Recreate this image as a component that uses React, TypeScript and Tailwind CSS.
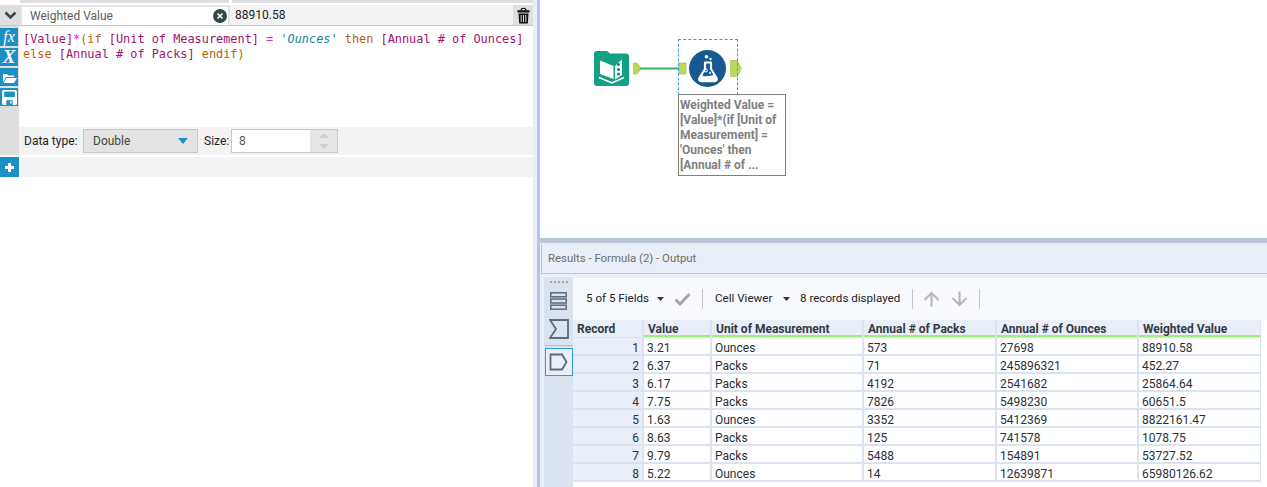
const headers = [
  { name: "Record", w: "w-[69px]" },
  { name: "Value", w: "w-[66px]" },
  { name: "Unit of Measurement", w: "w-[150px]" },
  { name: "Annual # of Packs", w: "w-[131px]" },
  { name: "Annual # of Ounces", w: "w-[140px]" },
  { name: "Weighted Value", w: "w-[121px]" },
];

const rows = [
  ["1", "3.21", "Ounces", "573", "27698", "88910.58"],
  ["2", "6.37", "Packs", "71", "245896321", "452.27"],
  ["3", "6.17", "Packs", "4192", "2541682", "25864.64"],
  ["4", "7.75", "Packs", "7826", "5498230", "60651.5"],
  ["5", "1.63", "Ounces", "3352", "5412369", "8822161.47"],
  ["6", "8.63", "Packs", "125", "741578", "1078.75"],
  ["7", "9.79", "Packs", "5488", "154891", "53727.52"],
  ["8", "5.22", "Ounces", "14", "12639871", "65980126.62"],
];

function RailButton({ children }: { children: React.ReactNode }) {
  return <div className="w-[18px] h-[18px] mb-[2px] bg-[#1c8fc4] flex items-center justify-center text-white">{children}</div>;
}

function Caret() {
  return <svg width="7" height="4" viewBox="0 0 7 4"><path d="M0 0h7L3.500 4z" fill="#333" /></svg>;
}

function FormulaPanel() {
  return (
    <div className="w-[533px] shrink-0 bg-white flex flex-col">
      <div className="h-[5px] flex pl-[20px] bg-white">
        <div className="w-[209px] h-[3px] bg-[#dedede]" />
        <div className="w-[281px] h-[3px] ml-[3px] bg-[#dedede]" />
        <div className="w-[20px] h-[3px] bg-[#dedede]" />
      </div>
      <div className="h-[21px] flex border-b border-[#c8c8c8]">
        <div className="w-[20px] bg-[#dedede] flex items-center justify-center">
          <svg width="13" height="9" viewBox="0 0 13 9"><path d="M1.500 1.500 6.500 6.500l5-5" fill="none" stroke="#37474f" strokeWidth="2.600" /></svg>
        </div>
        <div className="w-[210px] bg-white border-2 border-[#e4e4e4] border-b-0 flex items-center pl-[8px] pr-[1px] text-[#5b5b5b]">
          <span className="flex-1">Weighted Value</span>
          <div className="w-[14px] h-[14px] rounded-full bg-[#2f4a4a] flex items-center justify-center">
            <svg width="8" height="8" viewBox="0 0 8 8"><path d="M1.500 1.500l5 5M6.500 1.500l-5 5" stroke="#fff" strokeWidth="1.600" /></svg>
          </div>
        </div>
        <div className="flex-1 bg-[#f3f3f3] flex items-center pl-[5px] text-[#222]">88910.58</div>
        <div className="w-[20px] bg-[#dedede] flex items-center justify-center">
          <svg width="13" height="17" viewBox="0 0 13 17">
            <path d="M4 3.500C4 .5 9 .5 9 3.500" fill="none" stroke="#111" strokeWidth="1.200" />
            <path d="M.5 3.200h12v2.300H.5z" fill="#111" />
            <path d="M1.500 6.500h10l-.7 10H2.200z" fill="#111" />
            <path d="M4.200 8v7M6.500 8v7M8.800 8v7" stroke="#dedede" strokeWidth="1" />
          </svg>
        </div>
      </div>
      <div className="flex h-[129px]">
        <div className="w-[19px] bg-[#dedede] pt-[2px]">
          <RailButton><span className="font-['Liberation_Serif',serif] italic text-[16px] leading-[18px]">fx</span></RailButton>
          <RailButton><span className="font-['Liberation_Serif',serif] italic font-bold text-[19px] leading-[18px]">X</span></RailButton>
          <RailButton>
            <svg width="15" height="13" viewBox="0 0 15 13"><path d="M1 3h4l1 1.500h6V6H4L1 11z" fill="#fff" /><path d="M4.500 7H15l-3 5H1.500z" fill="#fff" /></svg>
          </RailButton>
          <RailButton>
            <svg width="15" height="15" viewBox="0 0 14 14"><path d="M0 1.500A1.500 1.500 0 0 1 1.500 0h11A1.500 1.500 0 0 1 14 1.500v11a1.500 1.500 0 0 1-1.500 1.500h-11A1.500 1.500 0 0 1 0 12.500z" fill="#fff" /><path d="M2 1.500h10v5H2z" fill="#1c8fc4" /><path d="M4 9.500h6V14H4z" fill="#1c8fc4" /><path d="M7.500 10.500h1.500v2H7.500z" fill="#fff" /></svg>
          </RailButton>
        </div>
        <div className="flex-1 flex flex-col min-w-0">
          <div className="h-[101px] pl-[4px] pt-[6px] font-['DejaVu_Sans_Mono',monospace] text-[11.88px] leading-[15px] whitespace-pre">
            <div>
              <span className="text-[#a0146e]">[Value]</span><span className="text-[#ee22ee]">*</span><span className="text-[#b8620e]">(if </span><span className="text-[#a0146e]">[Unit of Measurement]</span><span className="text-[#ee22ee]"> = </span><span className="text-[#12899a] italic">'Ounces'</span><span className="text-[#b8620e]"> then </span><span className="text-[#a0146e]">[Annual # of Ounces]</span>
            </div>
            <div>
              <span className="text-[#b8620e]">else </span><span className="text-[#a0146e]">[Annual # of Packs]</span><span className="text-[#b8620e]"> endif)</span>
            </div>
          </div>
          <div className="h-[28px] bg-[#f3f3f3] flex items-center pl-[5px] text-[#222]">
            <span className="w-[59px]">Data type:</span>
            <div className="w-[115px] h-[24px] bg-[#e3e3e3] border border-[#c8c8c8] flex items-center pl-[9px] pr-[9px] text-[#444]">
              <span className="flex-1">Double</span>
              <svg width="10" height="6" viewBox="0 0 10 6"><path d="M0 0h10L5 6z" fill="#1c8fc4" /></svg>
            </div>
            <span className="ml-[6px] w-[27px]">Size:</span>
            <div className="w-[107px] h-[24px] bg-white border border-[#c8c8c8] flex text-[#555]">
              <span className="flex-1 pl-[7px] leading-[22px]">8</span>
              <div className="w-[27px] bg-[#e6e6e6] flex flex-col items-center justify-around">
                <svg width="10" height="5" viewBox="0 0 10 5"><path d="M0 5h10L5 0z" fill="#cfcfcf" /></svg>
                <svg width="10" height="5" viewBox="0 0 10 5"><path d="M0 0h10L5 5z" fill="#cfcfcf" /></svg>
              </div>
            </div>
          </div>
        </div>
      </div>
      <div className="h-[20px] mt-[2px] flex bg-[#f3f3f3]">
        <div className="w-[19px] bg-[#1c8fc4] flex items-center justify-center">
          <svg width="9" height="9" viewBox="0 0 9 9"><path d="M3 0h3v3h3v3H6v3H3V6H0V3h3z" fill="#fff" /></svg>
        </div>
      </div>
    </div>
  );
}

function Canvas() {
  return (
    <div className="relative h-[238px] bg-white shrink-0">
      <svg className="absolute left-[54px] top-[51px]" width="35" height="35" viewBox="0 0 35 35">
        <path d="M3 0h10l3 2.500h16a3 3 0 0 1 3 3V32a3 3 0 0 1-3 3H3a3 3 0 0 1-3-3V3a3 3 0 0 1 3-3z" fill="#14a085" />
        <path d="M6 9.500l13.500 5.500v13L6 23z" fill="#fff" />
        <path d="M21 15l7-6.500V24l-7 4.500z" fill="#fff" />
        <path d="M5 26.500 18 32l12-5.500" fill="none" stroke="#fff" strokeWidth="1.500" />
        <circle cx="24.500" cy="13.500" r="1.500" fill="#14806f" /><circle cx="24.500" cy="18.500" r="1.500" fill="#14806f" /><circle cx="24.500" cy="23" r="1.500" fill="#14806f" />
      </svg>
      <svg className="absolute left-[93px] top-[60px]" width="148" height="18" viewBox="0 0 148 18">
        <path d="M.5 3h3.500l3 3.500v4L4 14H.5z" fill="#bcd85f" stroke="#9ebd45" strokeWidth=".6" />
        <path d="M7 8.500h40" stroke="#3fae5c" strokeWidth="2" />
        <path d="M46 3h7v11h-7z" fill="#bcd85f" stroke="#9ebd45" strokeWidth=".6" />
        <path d="M97.500.5h6.500l4.500 8-4.500 8h-6.500z" fill="#bcd85f" stroke="#9ebd45" strokeWidth=".6" />
      </svg>
      <div className="absolute left-[138px] top-[39px] w-[60px] h-[56px] border border-dashed border-[#3a9ae0]" />
      <div className="absolute left-[149px] top-[50px] w-[37px] h-[37px] rounded-full bg-[#16588f] flex items-center justify-center">
        <svg width="30" height="30" viewBox="0 0 30 30">
          <circle cx="13.500" cy="2.800" r="1.800" fill="#fff" /><circle cx="17.500" cy="5" r="1.200" fill="#fff" />
          <path d="M12 8.500h6v6.500l5.500 9c.8 1.800 0 3.200-2 3.200H8.500c-2 0-2.800-1.400-2-3.200L12 15z" fill="none" stroke="#fff" strokeWidth="2.200" strokeLinejoin="round" />
          <path d="M8.500 21c3 2.500 9 .5 13 0l1.500 3.500c.5 1.500-.5 2.700-2 2.700H9c-1.500 0-2.500-1.200-2-2.700z" fill="#fff" />
          <circle cx="13" cy="16.500" r="1.500" fill="none" stroke="#fff" strokeWidth="1" /><circle cx="17" cy="19" r="1" fill="#fff" />
        </svg>
      </div>
      <div className="absolute left-[138px] top-[94px] w-[108px] h-[82px] bg-white border border-[#808080] pl-[1px] pt-[3px] text-[12px] leading-[15px] font-bold text-[#808080] whitespace-pre">
        {"Weighted Value =\n[Value]*(if [Unit of\nMeasurement] =\n'Ounces' then\n[Annual # of ..."}
      </div>
    </div>
  );
}

function Results() {
  return (
    <div className="flex-1 min-h-0 flex flex-col bg-[#e9eef8] pl-[4px]">
      <div className="h-[32px] -ml-[3px] pl-[6px] pt-[1px] flex items-center border-t border-l border-b border-[#c6c6c6] text-[#6d6d6d] text-[11.4px] shrink-0">Results - Formula (2) - Output</div>
      <div className="flex flex-1 min-h-0 pt-[3px]">
        <div className="w-[29px] bg-[#dbe2f0] rounded-t-[4px] shrink-0 flex flex-col items-center pt-[4px]">
          <div className="w-[18px] border-t-2 border-dotted border-[#a8a8a8] mb-[9px]" />
          <svg className="mb-[9px]" width="17" height="18" viewBox="0 0 17 18" fill="none" stroke="#5a6b7d" strokeWidth="1.500">
            <rect x=".8" y=".8" width="15.400" height="4" /><rect x=".8" y="7" width="15.400" height="4" /><rect x=".8" y="13.200" width="15.400" height="4" />
          </svg>
          <svg className="mb-[6px]" width="20" height="20" viewBox="0 0 20 20" fill="none" stroke="#5a6b7d" strokeWidth="1.800"><path d="M1 1h18v18H1l6-9z" /></svg>
          <div className="w-[28px] h-[1px] bg-[#b9b9b9] mb-[2px]" />
          <div className="w-[28px] h-[28px] bg-[#e9eef8] border border-[#2e9be6] flex items-center justify-center">
            <svg width="19" height="18" viewBox="0 0 19 18" fill="none" stroke="#5a6b7d" strokeWidth="1.800"><path d="M1.500 1.500h11.500l4.500 7.500-4.500 7.500H1.500z" /></svg>
          </div>
        </div>
        <div className="flex-1 min-w-0 flex flex-col bg-white mt-[1px]">
          <div className="h-[42px] pb-[1px] bg-[#f8faff] flex items-center pl-[13px] text-[#222] text-[11.6px] shrink-0">
            <span className="w-[71px] whitespace-nowrap">5 of 5 Fields</span>
            <Caret />
            <svg className="ml-[10px]" width="17" height="14" viewBox="0 0 17 14"><path d="M1.500 7.500 6 12l9.500-10" fill="none" stroke="#a8a8a8" strokeWidth="3" /></svg>
            <div className="w-[1px] h-[20px] bg-[#c4c4c4] ml-[11px] mr-[12px]" />
            <span className="w-[68px] whitespace-nowrap">Cell Viewer</span>
            <Caret />
            <span className="ml-[10px] w-[100px] whitespace-nowrap">8 records displayed</span>
            <div className="w-[1px] h-[20px] bg-[#c4c4c4] ml-[12px] mr-[10px]" />
            <svg width="17" height="16" viewBox="0 0 17 16" fill="none" stroke="#b8b8b8" strokeWidth="2.200"><path d="M8.500 15.500V2M1.500 9l7-7 7 7" /></svg>
            <svg className="ml-[11px]" width="17" height="16" viewBox="0 0 17 16" fill="none" stroke="#b8b8b8" strokeWidth="2.200"><path d="M8.500.5V14M1.500 7l7 7 7-7" /></svg>
            <div className="w-[1px] h-[20px] bg-[#c4c4c4] ml-[11px]" />
          </div>
          <div className="w-[688px] bg-[#dbe3f1] text-[#2a2f38]">
            <div className="flex h-[18px] gap-[2px] font-bold text-[#333a44]">
              {headers.map((h, i) => (
                <div key={h.name} className={`${h.w} h-[17px] shrink-0 bg-[#e9eef8] pl-[4px] pt-[3px] ${i > 0 ? "border-b-2 border-[#9bf07c]" : ""}`}>{h.name}</div>
              ))}
            </div>
            {rows.map((row) => (
              <div key={row[0]} className="flex gap-[2px] h-[18px]">
                {row.map((cell, i) => (
                  <div key={i} className={`${headers[i].w} h-[16px] shrink-0 pl-[3px] pt-[4px] ${i === 0 ? "bg-[#e9eef8] text-right pr-[3px]" : "bg-white"}`}>{cell}</div>
                ))}
              </div>
            ))}
          </div>
        </div>
      </div>
    </div>
  );
}

export default function App() {
  return (
    <div className="w-[1267px] h-[487px] overflow-hidden flex bg-white font-['Roboto','Noto_Sans',sans-serif] text-[12px] leading-none">
      <FormulaPanel />
      <div className="w-[4px] shrink-0 bg-[#e9eef8]" />
      <div className="w-[3px] shrink-0 bg-[#b4c4e2]" />
      <div className="flex-1 min-w-0 flex flex-col">
        <Canvas />
        <div className="h-[4px] shrink-0 bg-[#b4c4e2]" />
        <Results />
      </div>
    </div>
  );
}
